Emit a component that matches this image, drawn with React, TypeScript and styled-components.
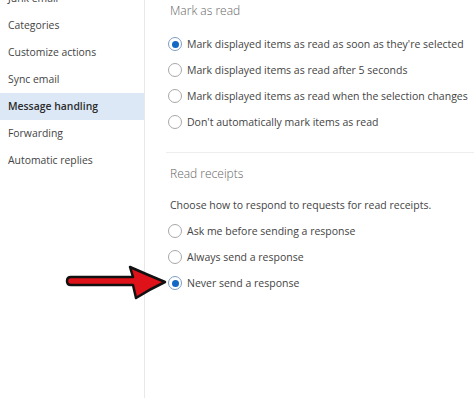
import styled, { createGlobalStyle } from "styled-components";

const GlobalStyle = createGlobalStyle`
    html, body {
        margin: 0;
        padding: 0;
        background: #ffffff;
    }
    body {
        font-family: "Open Sans", "Liberation Sans", sans-serif;
        color: #333333;
    }
`;

const Page = styled.div`
    position: relative;
    display: flex;
    width: 474px;
    height: 398px;
    overflow: hidden;
    background: #ffffff;
`;

const Sidebar = styled.nav`
    flex: 0 0 144px;
    border-right: 1px solid #e8e8e8;
    display: flex;
    flex-direction: column;
    margin-top: -15px;
`;

const NavItem = styled.div<{ $active?: boolean }>`
    height: 27px;
    line-height: 27px;
    padding-left: 8px;
    font-size: 10.4px;
    color: ${(p) => (p.$active ? "#2b2b2b" : "#444444")};
    font-weight: ${(p) => (p.$active ? 600 : 400)};
    background: ${(p) => (p.$active ? "#dce8f6" : "transparent")};
    white-space: nowrap;
`;

const Main = styled.main`
    flex: 1;
    display: flex;
    flex-direction: column;
    padding-left: 23px;
`;

const Heading = styled.div<{ $top: number }>`
    margin-top: ${(p) => p.$top}px;
    height: 22px;
    line-height: 22px;
    font-size: 12px;
    font-weight: 300;
    color: #666666;
    padding-left: 2px;
`;

const Note = styled.div`
    margin-top: 7px;
    height: 26px;
    line-height: 26px;
    font-size: 10.5px;
    color: #444444;
    padding-left: 2px;
`;

const RadioList = styled.div<{ $top: number }>`
    margin-top: ${(p) => p.$top}px;
    display: flex;
    flex-direction: column;
`;

const RadioRow = styled.label`
    display: flex;
    align-items: center;
    gap: 5px;
    height: 26px;
    font-size: 10.5px;
    color: #444444;
    white-space: nowrap;
`;

const Circle = styled.span<{ $checked?: boolean }>`
    box-sizing: border-box;
    width: 14px;
    height: 14px;
    border-radius: 50%;
    border: 1px solid ${(p) => (p.$checked ? "#7d9cc4" : "#a8a8a8")};
    background: #ffffff;
    display: flex;
    align-items: center;
    justify-content: center;
    &::after {
        content: "";
        width: 7px;
        height: 7px;
        border-radius: 50%;
        background: ${(p) => (p.$checked ? "#1468c4" : "transparent")};
    }
`;

const Divider = styled.hr`
    margin: 17px 0 0 -2px;
    border: none;
    border-top: 1px solid #eeeeee;
    height: 0;
`;

const Arrow = styled.svg`
    position: absolute;
    left: 64px;
    top: 263px;
`;

function Radio({ label, checked }: { label: string; checked?: boolean }) {
    return (
        <RadioRow>
            <Circle $checked={checked} />
            {label}
        </RadioRow>
    );
}

const navItems = [
    "Junk email",
    "Categories",
    "Customize actions",
    "Sync email",
    "Message handling",
    "Forwarding",
    "Automatic replies",
];

export default function App() {
    return (
        <Page>
            <GlobalStyle />
            <Sidebar>
                {navItems.map((item) => (
                    <NavItem key={item} $active={item === "Message handling"}>
                        {item}
                    </NavItem>
                ))}
            </Sidebar>
            <Main>
                <Heading $top={0}>Mark as read</Heading>
                <RadioList $top={9}>
                    <Radio checked label="Mark displayed items as read as soon as they're selected" />
                    <Radio label="Mark displayed items as read after 5 seconds" />
                    <Radio label="Mark displayed items as read when the selection changes" />
                    <Radio label="Don't automatically mark items as read" />
                </RadioList>
                <Divider />
                <Heading $top={10}>Read receipts</Heading>
                <Note>Choose how to respond to requests for read receipts.</Note>
                <RadioList $top={0}>
                    <Radio label="Ask me before sending a response" />
                    <Radio label="Always send a response" />
                    <Radio checked label="Never send a response" />
                </RadioList>
            </Main>
            <Arrow width="106" height="40" viewBox="0 0 106 40">
                <path
                    d="M7 14 L69 14 L66 4 Q 84 12 101 19 Q 86 26 72 35 L69 22 L7 22 Q 3 22 3 18 Q 3 14 7 14 Z"
                    fill="#e01219"
                    stroke="#111111"
                    strokeWidth="2.5"
                    strokeLinejoin="round"
                />
            </Arrow>
        </Page>
    );
}
